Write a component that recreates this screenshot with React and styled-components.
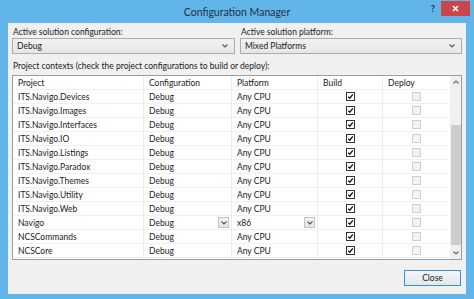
import * as React from "react";
import styled, { createGlobalStyle } from "styled-components";

const Global = createGlobalStyle`
    html, body {
        margin: 0;
        padding: 0;
        background: #62b5e9;
    }
`;

// window frame
const Window = styled.div`
    width: 474px;
    height: 299px;
    box-sizing: border-box;
    background: #62b5e9;
    display: flex;
    flex-direction: column;
    padding: 0 8px 5px 8px;
    font-family: Lato, "Open Sans", sans-serif;
    font-size: 8.5px;
    color: #1b1b1b;
`;

const TitleBar = styled.div`
    height: 23px;
    flex: none;
    display: flex;
    align-items: center;
    position: relative;
`;

const Title = styled.div`
    flex: 1;
    text-align: center;
    font-size: 10.5px;
    color: #1d3347;
    padding-top: 1px;
`;

const HelpButton = styled.div`
    position: absolute;
    right: 31px;
    top: 3px;
    font-size: 9px;
    font-weight: bold;
    color: #1d3347;
`;

const CloseX = styled.div`
    position: absolute;
    right: -4px;
    top: 1px;
    width: 29px;
    height: 15px;
    background: #c9474a;
    display: flex;
    align-items: center;
    justify-content: center;
`;

const Body = styled.div`
    flex: 1;
    background: #f0f0f0;
    padding: 3px 4px 0 4px;
    display: flex;
    flex-direction: column;
`;

const TopRow = styled.div`
    display: grid;
    grid-template-columns: 223px 222px;
    column-gap: 5px;
`;

const Field = styled.div`
    display: flex;
    flex-direction: column;
`;

const Label = styled.div`
    height: 12px;
    line-height: 12px;
    padding-left: 1px;
`;

const Combo = styled.div`
    height: 16px;
    box-sizing: border-box;
    border: 1px solid #acacac;
    background: linear-gradient(#f2f2f2, #e6e6e6);
    display: flex;
    align-items: center;
    justify-content: space-between;
    padding: 0 6px 0 4px;
`;

const SectionLabel = styled.div`
    margin-top: 6px;
    height: 12px;
    line-height: 12px;
    padding-left: 1px;
`;

const TableBox = styled.div`
    margin-top: 3px;
    height: 185px;
    box-sizing: border-box;
    border: 1px solid #9a9ea6;
    background: #fff;
    display: flex;
`;

const Grid = styled.div`
    flex: 1;
    display: grid;
    grid-template-columns: 131px 88px 86px 65px 67px;
    grid-auto-rows: 14px;
    grid-template-rows: 14px;
    align-content: start;
`;

const Cell = styled.div`
    box-sizing: border-box;
    border-right: ${(p) => (p.$last ? "none" : "1px solid #ececec")};
    border-bottom: 1px solid #f0f0f0;
    display: flex;
    align-items: center;
    justify-content: ${(p) => (p.$center ? "center" : "space-between")};
    padding: 0 ${(p) => (p.$center ? 0 : 5)}px;
    white-space: nowrap;
    padding-top: ${(p) => (p.$head ? 1 : 0)}px;
`;

const ScrollBar = styled.div`
    width: 11px;
    background: #f0f0f0;
    display: flex;
    flex-direction: column;
    align-items: center;
    position: relative;
`;

const Arrow = styled.div`
    height: 12px;
    display: flex;
    align-items: center;
    justify-content: center;
`;

const Thumb = styled.div`
    position: absolute;
    left: 1px;
    right: 0;
    top: 49px;
    height: 120px;
    background: #cdcdcd;
`;

const Check = styled.div`
    width: 9px;
    height: 9px;
    box-sizing: border-box;
    border: 1px solid ${(p) => (p.$disabled ? "#cfcfcf" : "#333")};
    background: ${(p) => (p.$disabled ? "#f3f3f3" : "#fff")};
    display: flex;
    align-items: center;
    justify-content: center;
`;

const DropButton = styled.div`
    width: 11px;
    height: 11px;
    box-sizing: border-box;
    border: 1px solid #c4c4c4;
    background: linear-gradient(#f4f4f4, #e4e4e4);
    display: flex;
    align-items: center;
    justify-content: center;
    margin-right: -3px;
`;

const Footer = styled.div`
    flex: 1;
    display: flex;
    justify-content: flex-end;
    align-items: flex-start;
    padding-top: 10px;
`;

const Button = styled.div`
    width: 57px;
    height: 16px;
    box-sizing: border-box;
    border: 1px solid #3c8fd0;
    background: linear-gradient(#f3f6f9, #e3e8ed);
    display: flex;
    align-items: center;
    justify-content: center;
    margin-right: 1px;
`;

const Chevron = ({ color = "#555" }) => (
    <svg width="6" height="4" viewBox="0 0 6 4">
        <path d="M0.5 0.5 L3 3 L5.5 0.5" fill="none" stroke={color} strokeWidth="1.1" />
    </svg>
);

const Tick = () => (
    <svg width="7" height="7" viewBox="0 0 7 7">
        <path d="M1.2 3.6 L2.8 5.2 L5.8 1.4" fill="none" stroke="#111" strokeWidth="1.3" />
    </svg>
);

const projects = [
    ["ITS.Navigo.Devices", "Any CPU"],
    ["ITS.Navigo.Images", "Any CPU"],
    ["ITS.Navigo.Interfaces", "Any CPU"],
    ["ITS.Navigo.IO", "Any CPU"],
    ["ITS.Navigo.Listings", "Any CPU"],
    ["ITS.Navigo.Paradox", "Any CPU"],
    ["ITS.Navigo.Themes", "Any CPU"],
    ["ITS.Navigo.Utility", "Any CPU"],
    ["ITS.Navigo.Web", "Any CPU"],
    ["Navigo", "x86", true],
    ["NCSCommands", "Any CPU"],
    ["NCSCore", "Any CPU"],
];

const App = () => {
    return (
        <Window>
            <Global />
            <TitleBar>
                <Title>Configuration Manager</Title>
                <HelpButton>?</HelpButton>
                <CloseX>
                    <svg width="7" height="7" viewBox="0 0 7 7">
                        <path d="M1 1 L6 6 M6 1 L1 6" stroke="#fff" strokeWidth="1.6" />
                    </svg>
                </CloseX>
            </TitleBar>
            <Body>
                <TopRow>
                    <Field>
                        <Label>Active solution configuration:</Label>
                        <Combo>
                            Debug
                            <Chevron />
                        </Combo>
                    </Field>
                    <Field>
                        <Label>Active solution platform:</Label>
                        <Combo>
                            Mixed Platforms
                            <Chevron />
                        </Combo>
                    </Field>
                </TopRow>
                <SectionLabel>
                    Project contexts (check the project configurations to build or deploy):
                </SectionLabel>
                <TableBox>
                    <Grid>
                        <Cell $head>Project</Cell>
                        <Cell $head>Configuration</Cell>
                        <Cell $head>Platform</Cell>
                        <Cell $head>Build</Cell>
                        <Cell $head $last>Deploy</Cell>
                        {projects.map(([name, platform, active]) => (
                            <React.Fragment key={name}>
                                <Cell>{name}</Cell>
                                <Cell>
                                    Debug
                                    {active && (
                                        <DropButton>
                                            <Chevron />
                                        </DropButton>
                                    )}
                                </Cell>
                                <Cell>
                                    {platform}
                                    {active && (
                                        <DropButton>
                                            <Chevron />
                                        </DropButton>
                                    )}
                                </Cell>
                                <Cell $center>
                                    <Check>
                                        <Tick />
                                    </Check>
                                </Cell>
                                <Cell $center $last>
                                    <Check $disabled />
                                </Cell>
                            </React.Fragment>
                        ))}
                    </Grid>
                    <ScrollBar>
                        <Arrow>
                            <svg width="6" height="4" viewBox="0 0 6 4">
                                <path d="M0.5 3.5 L3 1 L5.5 3.5" fill="none" stroke="#666" strokeWidth="1.1" />
                            </svg>
                        </Arrow>
                        <Thumb />
                        <div style={{ flex: 1 }} />
                        <Arrow>
                            <Chevron color="#666" />
                        </Arrow>
                    </ScrollBar>
                </TableBox>
                <Footer>
                    <Button>Close</Button>
                </Footer>
            </Body>
        </Window>
    );
};

export default App;
